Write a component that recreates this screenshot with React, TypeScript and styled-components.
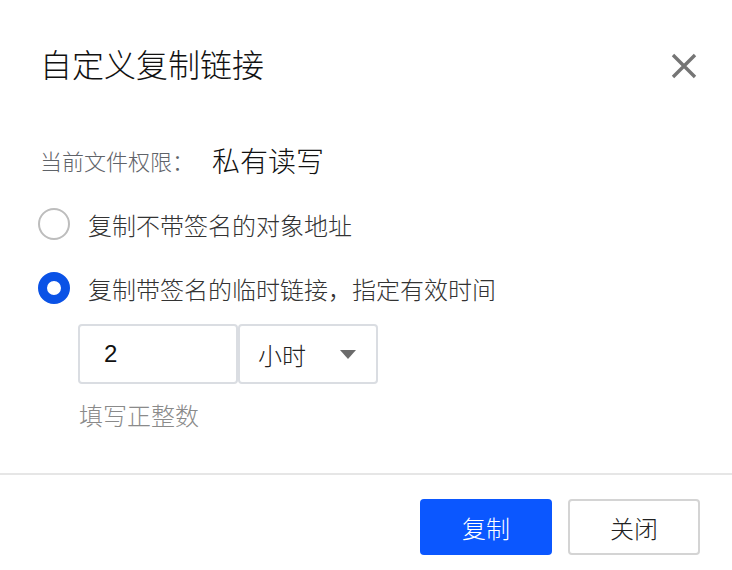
import React from "react";
import styled, { createGlobalStyle } from "styled-components";

const Global = createGlobalStyle`
  html, body { margin: 0; padding: 0; background: #fff; }
  body { font-family: "Liberation Sans", "Noto Sans CJK SC", sans-serif; }
  * { box-sizing: border-box; }
`;

const Dialog = styled.div`
  width: 732px;
  height: 570px;
  background: #fff;
  display: flex;
  flex-direction: column;
`;

const Header = styled.div`
  display: flex;
  align-items: center;
  justify-content: space-between;
  padding: 40px 32px 0 40px;
  height: 92px;
`;

const Title = styled.h1`
  margin: 0;
  font-size: 32px;
  font-weight: 300;
  line-height: 52px;
  color: #111;
`;

const CloseButton = styled.button`
  border: 0;
  background: none;
  padding: 0;
  width: 32px;
  height: 32px;
  display: flex;
  align-items: center;
  justify-content: center;
  cursor: pointer;
`;

const Body = styled.div`
  padding: 50px 40px 0 40px;
  display: flex;
  flex-direction: column;
`;

const PermRow = styled.div`
  display: flex;
  align-items: center;
  height: 36px;
`;

const PermLabel = styled.span`
  font-size: 22px;
  font-weight: 300;
  color: #5f6369;
`;

const PermValue = styled.span`
  font-size: 28px;
  font-weight: 300;
  color: #111;
  margin-left: 18px;
`;

const OptionRow = styled.label`
  display: flex;
  align-items: center;
  height: 36px;
  margin-top: 28px;
  margin-left: -2px;
  cursor: pointer;
`;

const Radio = styled.span<{ $checked?: boolean }>`
  width: 32px;
  height: 32px;
  border-radius: 50%;
  flex: none;
  border: ${(p) => (p.$checked ? "9.5px solid #0a52e6" : "2px solid #bdbdbd")};
  background: #fff;
`;

const OptionText = styled.span`
  font-size: 24px;
  font-weight: 300;
  color: #333;
  margin-left: 18px;
`;

const DurationRow = styled.div`
  display: flex;
  margin-top: 18px;
  margin-left: 38px;
  height: 60px;
`;

const NumberInput = styled.input`
  width: 160px;
  height: 60px;
  border: 2px solid #dadde2;
  border-radius: 4px;
  padding: 0 0 0 24px;
  font-family: "Liberation Sans", "Noto Sans CJK SC", sans-serif;
  font-size: 24px;
  color: #111;
  outline: none;
`;

const Select = styled.div`
  width: 140px;
  height: 60px;
  border: 2px solid #dadde2;
  border-radius: 4px;
  display: flex;
  align-items: center;
  justify-content: space-between;
  padding: 0 20px 0 18px;
  font-size: 24px;
  font-weight: 300;
  color: #222;
`;

const Caret = styled.span`
  width: 0;
  height: 0;
  border-left: 8px solid transparent;
  border-right: 8px solid transparent;
  border-top: 9px solid #6b6b6b;
`;

const Hint = styled.div`
  margin-top: 15px;
  margin-left: 39px;
  font-size: 24px;
  font-weight: 300;
  line-height: 36px;
  color: #8a8a8a;
`;

const Divider = styled.div`
  height: 2px;
  background: #e6e6e6;
  margin-top: 38px;
`;

const Footer = styled.div`
  display: flex;
  justify-content: flex-end;
  gap: 16px;
  padding: 24px 32px 0 0;
`;

const Button = styled.button<{ $primary?: boolean }>`
  width: 132px;
  height: 56px;
  border-radius: 4px;
  font-family: "Liberation Sans", "Noto Sans CJK SC", sans-serif;
  font-size: 24px;
  font-weight: 300;
  cursor: pointer;
  background: ${(p) => (p.$primary ? "#0b57ff" : "#fff")};
  color: ${(p) => (p.$primary ? "#fff" : "#222")};
  border: ${(p) => (p.$primary ? "none" : "2px solid #d4d4d4")};
`;

export default function App() {
  return (
    <>
      <Global />
      <Dialog>
        <Header>
          <Title>自定义复制链接</Title>
          <CloseButton aria-label="关闭">
            <svg width="26" height="26" viewBox="0 0 26 26">
              <path d="M2 2 L24 24 M24 2 L2 24" stroke="#757575" strokeWidth="3.4" strokeLinecap="butt" />
            </svg>
          </CloseButton>
        </Header>
        <Body>
          <PermRow>
            <PermLabel>当前文件权限：</PermLabel>
            <PermValue>私有读写</PermValue>
          </PermRow>
          <OptionRow>
            <Radio />
            <OptionText>复制不带签名的对象地址</OptionText>
          </OptionRow>
          <OptionRow>
            <Radio $checked />
            <OptionText>复制带签名的临时链接，指定有效时间</OptionText>
          </OptionRow>
          <DurationRow>
            <NumberInput defaultValue="2" />
            <Select>
              <span>小时</span>
              <Caret />
            </Select>
          </DurationRow>
          <Hint>填写正整数</Hint>
        </Body>
        <Divider />
        <Footer>
          <Button $primary>复制</Button>
          <Button>关闭</Button>
        </Footer>
      </Dialog>
    </>
  );
}
